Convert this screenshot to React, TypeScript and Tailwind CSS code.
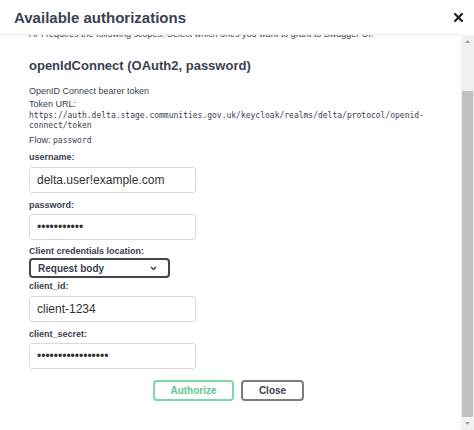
import React from "react";

type FieldProps = {
  label: string;
  value: string;
  secret?: boolean;
  labelGap: string;
  inputGap: string;
};

function Field({ label, value, secret, labelGap, inputGap }: FieldProps) {
  return (
    <div>
      <div className={`${labelGap} text-[9px] leading-[12px] font-bold text-[#3b4151]`}>{label}</div>
      <input
        readOnly
        type={secret ? "password" : "text"}
        value={value}
        className={`${inputGap} block w-[167px] h-[26px] px-[7px] border border-[#d9d9d9] rounded-[3px] bg-white text-[12px] text-[#333] outline-none font-['Liberation_Sans',Arial,sans-serif]`}
      />
    </div>
  );
}

export default function App() {
  return (
    <div className="w-[474px] h-[430px] bg-white overflow-hidden font-['Liberation_Sans',Arial,sans-serif] text-[#3b4151]">
      {/* header */}
      <div className="h-[34px] flex items-center justify-between pl-[14px] pr-[11px]">
        <h2 className="text-[15px] font-bold leading-none text-[#3b4151]">Available authorizations</h2>
        <svg width="9" height="9" viewBox="0 0 9 9">
          <path d="M1 1 L8 8 M8 1 L1 8" stroke="#222" strokeWidth="2.2" strokeLinecap="square" />
        </svg>
      </div>
      <div className="h-px bg-[#ebebeb] mr-[13px]" />

      <div className="flex h-[395px]">
        {/* scrolled content */}
        <div className="flex-1 overflow-hidden">
          <div className="pl-[29px] -mt-[7px] text-[9px] leading-[12px] whitespace-nowrap text-[#3b4151]">
            API requires the following scopes. Select which ones you want to grant to Swagger UI.
          </div>

          <div className="pl-[29px]">
            <h4 className="mt-[18px] text-[13px] leading-[16px] font-bold">openIdConnect (OAuth2, password)</h4>
            <p className="mt-[11px] text-[9px] leading-[12px]">OpenID Connect bearer token</p>
            <p className="mt-[1px] text-[9px] leading-[12px]">Token URL:</p>
            <p className="mt-[1px] pr-[30px] text-[8px] leading-[10px] font-['DejaVu_Sans_Mono',monospace] break-all">
              https://auth.delta.stage.communities.gov.uk/keycloak/realms/delta/protocol/openid-
              <br />
              connect/token
            </p>
            <p className="mt-[3px] text-[9px] leading-[12px]">
              Flow: <code className="text-[8px] font-['DejaVu_Sans_Mono',monospace]">password</code>
            </p>

            <Field label="username:" value="delta.user!example.com" labelGap="mt-[4px]" inputGap="mt-[4px]" />
            <Field label="password:" value="xxxxxxxxxxx" secret labelGap="mt-[6px]" inputGap="mt-[3px]" />

            <div className="mt-[5px] text-[9px] leading-[12px] font-bold">Client credentials location:</div>
            <div className="mt-[1px] w-[141px] h-[20px] border-2 border-[#41444e] rounded-[4px] flex items-center justify-between pl-[7px] pr-[11px]">
              <span className="text-[10px] font-bold text-[#3b4151]">Request body</span>
              <svg width="7" height="5" viewBox="0 0 7 5">
                <path d="M1 1 L3.5 3.5 L6 1" fill="none" stroke="#3b4151" strokeWidth="1.5" />
              </svg>
            </div>

            <Field label="client_id:" value="client-1234" labelGap="mt-[2px]" inputGap="mt-[4px]" />
            <Field label="client_secret:" value="xxxxxxxxxxxxxxxxx" secret labelGap="mt-[6px]" inputGap="mt-[3px]" />
          </div>

          <div className="mt-[11px] flex justify-center gap-[7px] pr-[4px]">
            <button className="w-[81px] h-[21px] border-2 border-[#7fd6a8] rounded-[4px] text-[10px] font-bold text-[#5fc68f]">
              Authorize
            </button>
            <button className="w-[63px] h-[21px] border-2 border-[#7d7d7d] rounded-[4px] text-[10px] font-bold text-[#3b4151]">
              Close
            </button>
          </div>
        </div>

        {/* scrollbar */}
        <div className="w-[13px] flex flex-col bg-[#f1f1f1]">
          <div className="h-[13px] flex items-center justify-center">
            <svg width="5" height="3" viewBox="0 0 5 3">
              <path d="M0 3 L2.5 0 L5 3 Z" fill="#a3a3a3" />
            </svg>
          </div>
          <div className="h-[43px]" />
          <div className="h-[326px] mx-[1px] bg-[#c1c1c1]" />
          <div className="h-[13px] flex items-center justify-center">
            <svg width="5" height="3" viewBox="0 0 5 3">
              <path d="M0 0 L2.5 3 L5 0 Z" fill="#a3a3a3" />
            </svg>
          </div>
        </div>
      </div>
    </div>
  );
}
